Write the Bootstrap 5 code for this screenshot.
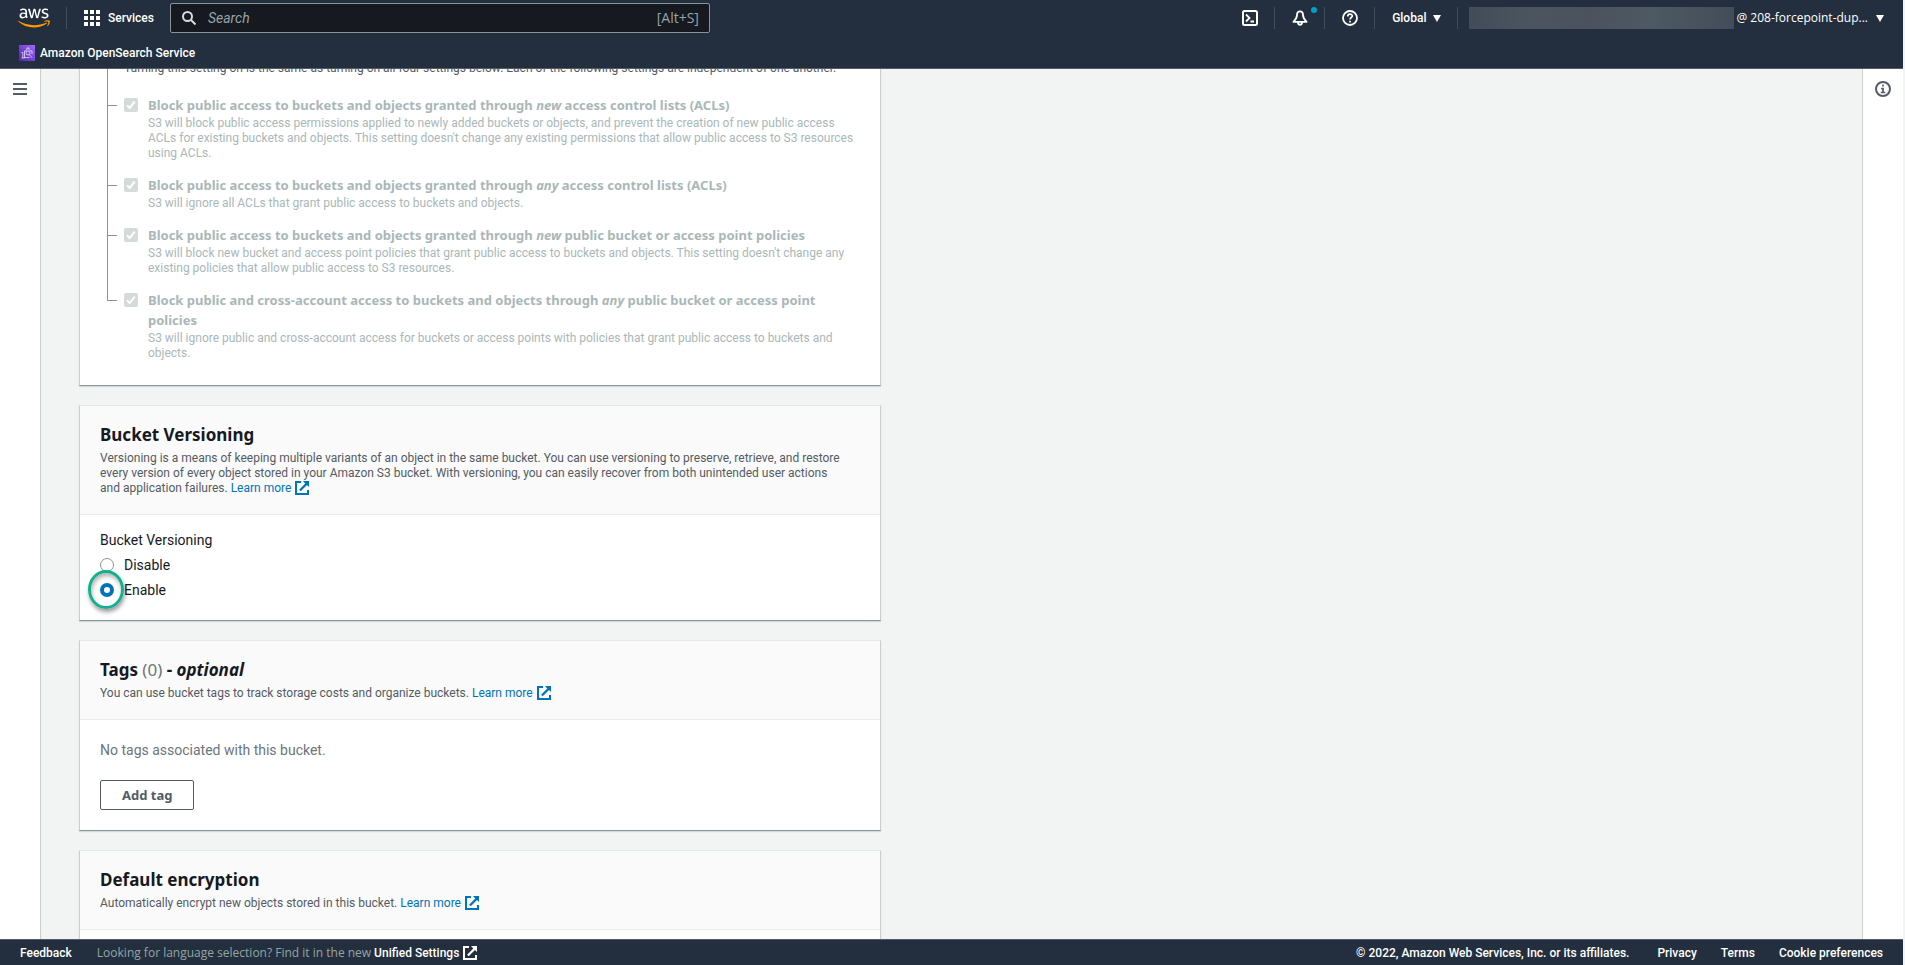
<!DOCTYPE html>
<html lang="en">
<head>
<meta charset="utf-8">
<meta name="viewport" content="width=device-width, initial-scale=1">
<title>Create bucket - Amazon S3</title>
<link href="https://cdn.jsdelivr.net/npm/bootstrap@5.3.0/dist/css/bootstrap.min.css" rel="stylesheet">
<style>
  :root { --navy: #232f3e; --ink: #16191f; --muted: #545b64; --disabled: #aab7b8; --blue: #0073bb; --line: #eaeded; }
  body { font-family: Roboto, "Open Sans", sans-serif; font-size: 14px; line-height: 20px; color: var(--ink); background: #f2f3f3; padding-right: 2px; }
  svg { display: block; flex: none; }
  a { text-decoration: none; }

  /* console header */
  .top-bar { background: var(--navy); border-bottom: 1px solid var(--muted); font-size: 12px; font-weight: 500; color: #fff; }
  .top-row { height: 36px; padding-left: 18px; padding-right: 19px; }
  .fav-row { height: 32px; padding: 2px 19px 0; }
  .top-bar a, .top-bar button, .foot-bar a, .foot-bar button { color: #fff; font-weight: 500; }
  .bare { background: none; border: 0; padding: 0; }
  .rule { width: 1px; height: 22px; background: #414d5c; flex: none; margin: 0 17px 0 16px; }
  .gap-tight { gap: 5px; }
  .search-box { width: 540px; height: 30px; margin-left: 16px; background: var(--ink); border: 1px solid #879596; border-radius: 2px; padding: 0 10px 0 11px; color: #95a5a6; font-size: 14px; }
  .search-box input { background: transparent; border: 0; outline: 0; color: #fff; font-size: 14px; font-weight: 400; padding: 0; min-width: 0; }
  .search-box input::placeholder { color: #95a5a6; font-style: italic; opacity: 1; }
  .search-box .hotkey { font-family: "Open Sans", sans-serif; font-weight: 400; }
  .dot { width: 6px; height: 6px; background: #00a1c9; top: -3px; right: -9px; }
  .redacted { width: 265px; height: 22px; background: linear-gradient(90deg, #414c59, #4a545f 20%, #4b525d 45%, #4d5963 68%, #434d59); margin-right: 2px; }
  .region { gap: 7px; }
  .account { font-family: "Open Sans", sans-serif; margin-left: -6px; }

  /* page frame */
  .side-strip { width: 41px; background: #fff; flex: none; }
  .side-left { border-right: 1px solid #c9cfcf; }
  .side-right { border-left: 1px solid #c9cfcf; }
  .work { padding-left: 38px; background: #f2f3f3; }
  .column { width: 802px; gap: 19px; }
  .column-scrolled { margin-top: -9px; }

  .panel { background: #fff; border: 1px solid #c9cfcf; border-top-color: #e4e8e8; border-bottom-color: #879596; box-shadow: 0 1px 1px #d5dbdb; }
  .panel-top { background: #fafafa; border-bottom: 1px solid var(--line); padding: 18px 20px; }
  .panel-main { padding: 15px 20px 20px; }
  .panel h2 { font-family: "Noto Sans", sans-serif; font-size: 17px; line-height: 22px; font-weight: 700; margin: 0 0 5px; }
  .note { font-size: 12px; line-height: 15px; color: var(--muted); margin: 0; }
  .note a { color: var(--blue); }
  .note svg { display: inline-block; vertical-align: -1px; margin: -4px 0 -2px 1px; }

  /* settings tree */
  .tree-panel { padding: 0 20px 24px; }
  .tree { padding-left: 7px; }
  .tree-intro { border-left: 1px solid #879596; padding: 1px 0 19px 16px; }
  .tree-row { position: relative; padding: 0 0 14px 17px; gap: 10px; }
  .tree-row::before { content: ""; position: absolute; left: 0; top: 0; width: 10px; height: 11px; border-left: 1px solid #879596; border-bottom: 1px solid #879596; }
  .tree-row:not(:last-child)::after { content: ""; position: absolute; left: 0; top: 11px; bottom: 0; border-left: 1px solid #879596; }
  .tree-row:last-child { padding-bottom: 0; }
  .tree-row label { display: block; font-family: "Noto Sans", sans-serif; font-size: 13px; line-height: 20px; font-weight: 700; color: var(--disabled); margin-bottom: 1px; }
  .tree-row .note { color: var(--disabled); }
  .tree-row input { appearance: none; flex: none; width: 14px; height: 14px; margin: 3px 0 0; border-radius: 2px; background: #d5dbdb url("data:image/svg+xml,%3Csvg xmlns='http://www.w3.org/2000/svg' viewBox='0 0 14 14'%3E%3Cpath d='M3 7.4 5.7 10 10.7 3.6' fill='none' stroke='%23fff' stroke-width='2'/%3E%3C/svg%3E"); }

  .panel legend { float: none; font-size: 14px; line-height: 20px; margin: 0; }
  .choice { gap: 10px; margin-top: 5px; }
  .choice input { appearance: none; width: 14px; height: 14px; margin: 0; border: 1px solid #879596; border-radius: 50%; background: #fff; }
  .choice input:checked { border: 4px solid var(--blue); }
  .ring { position: absolute; left: -12px; top: -10px; width: 36px; height: 39px; border: 3px solid #10b090; border-radius: 50%; box-shadow: 1px 3px 4px rgba(0,0,0,.4), inset 1px 3px 4px rgba(0,0,0,.3); pointer-events: none; }
  .add-btn { font-family: "Noto Sans", sans-serif; font-size: 13px; line-height: 20px; font-weight: 700; color: var(--muted); background: #fff; border: 1px solid var(--muted); border-radius: 2px; padding: 4px 21px; margin-top: 20px; }

  .foot-bar { background: var(--navy); border-top: 1px solid var(--muted); height: 27px; font-size: 12px; font-weight: 500; color: #fff; padding: 1px 20px 0; }
  .foot-bar .hint { font-family: "Open Sans", sans-serif; font-weight: 400; color: #95a5a6; margin-left: 25px; }
</style>
</head>
<body class="d-flex flex-column vh-100 overflow-hidden">

<svg width="0" height="0" class="position-absolute" aria-hidden="true">
  <symbol id="ext" viewBox="0 0 14 14"><path d="M6 1H1v12h12V9" fill="none" stroke="currentColor" stroke-width="2"/><path d="M8 0h6v6l-2-2-6.300 6.300-1.600-1.600L10.300 2.400z" fill="currentColor"/></symbol>
</svg>

<header class="top-bar">
  <div class="top-row d-flex align-items-center">
    <a href="#" aria-label="AWS home">
      <svg width="32" height="22" viewBox="0 0 304 182" aria-hidden="true">
        <path fill="#fff" d="M86.400 66.400c0 3.700.4 6.700 1.100 8.900.8 2.200 1.800 4.600 3.200 7.200.5.800.7 1.600.7 2.300 0 1-.6 2-1.900 3l-6.300 4.200c-.9.600-1.800.9-2.600.9-1 0-2-.5-3-1.400-1.400-1.500-2.600-3.100-3.600-4.700-1-1.700-2-3.600-3.100-5.900-7.800 9.200-17.600 13.800-29.400 13.800-8.400 0-15.100-2.400-20-7.200-4.900-4.800-7.400-11.200-7.400-19.200 0-8.500 3-15.400 9.100-20.600 6.100-5.200 14.200-7.800 24.500-7.800 3.400 0 6.900.3 10.600.8 3.700.5 7.500 1.300 11.500 2.200v-7.300c0-7.600-1.600-12.900-4.700-16-3.200-3.100-8.600-4.600-16.300-4.600-3.500 0-7.100.4-10.800 1.300-3.700.9-7.300 2-10.800 3.400-1.600.7-2.800 1.100-3.500 1.300-.7.200-1.200.3-1.600.3-1.400 0-2.100-1-2.100-3.100v-4.900c0-1.600.2-2.800.7-3.500.5-.7 1.400-1.400 2.800-2.100 3.500-1.800 7.700-3.300 12.600-4.500 4.900-1.300 10.100-1.900 15.600-1.900 11.900 0 20.600 2.700 26.200 8.100 5.500 5.400 8.300 13.600 8.300 24.600v32.400zM45.800 81.600c3.300 0 6.700-.6 10.300-1.800 3.600-1.200 6.800-3.400 9.500-6.400 1.600-1.900 2.800-4 3.400-6.400.6-2.400 1-5.300 1-8.700v-4.200c-2.900-.7-6-1.300-9.200-1.700-3.200-.4-6.300-.6-9.400-.6-6.700 0-11.600 1.300-14.900 4-3.300 2.700-4.900 6.500-4.900 11.500 0 4.700 1.200 8.200 3.700 10.600 2.400 2.500 5.900 3.700 10.500 3.700zm80.300 10.800c-1.800 0-3-.3-3.800-1-.8-.6-1.500-2-2.100-3.900L96.700 10.200c-.6-2-.9-3.300-.9-4 0-1.600.8-2.500 2.400-2.500h9.800c1.900 0 3.200.3 3.900 1 .8.600 1.400 2 2 3.900l16.800 66.200 15.600-66.200c.5-2 1.100-3.300 1.900-3.900.8-.6 2.200-1 4-1h8c1.900 0 3.200.3 4 1 .8.600 1.500 2 1.900 3.900l15.800 67 17.300-67c.6-2 1.300-3.300 2-3.900.8-.6 2.100-1 3.900-1h9.300c1.600 0 2.500.8 2.500 2.500 0 .5-.1 1-.2 1.600-.1.600-.3 1.400-.7 2.500l-24.100 77.300c-.6 2-1.300 3.300-2.100 3.900-.8.600-2.100 1-3.800 1h-8.600c-1.900 0-3.200-.3-4-1-.8-.7-1.500-2-1.900-4L156 23l-15.400 64.400c-.5 2-1.100 3.300-1.900 4-.8.700-2.200 1-4 1zm128.500 2.700c-5.200 0-10.400-.6-15.400-1.800-5-1.200-8.900-2.500-11.500-4-1.600-.9-2.700-1.900-3.100-2.800-.4-.9-.6-1.900-.6-2.800v-5.100c0-2.100.8-3.100 2.300-3.100.6 0 1.200.1 1.800.3.6.2 1.500.6 2.500 1 3.400 1.500 7.100 2.700 11 3.500 4 .8 7.900 1.200 11.900 1.200 6.300 0 11.200-1.100 14.600-3.300 3.400-2.200 5.200-5.400 5.200-9.500 0-2.800-.9-5.100-2.700-7-1.800-1.900-5.200-3.600-10.100-5.200L246 52c-7.300-2.300-12.700-5.700-16-10.200-3.300-4.400-5-9.300-5-14.500 0-4.200.9-7.900 2.700-11.100 1.800-3.200 4.200-6 7.200-8.200 3-2.300 6.400-4 10.400-5.200 4-1.200 8.200-1.700 12.600-1.700 2.200 0 4.500.1 6.700.4 2.300.3 4.400.7 6.500 1.100 2 .5 3.900 1 5.700 1.600 1.800.6 3.200 1.200 4.200 1.800 1.400.8 2.400 1.600 3 2.500.6.800.9 1.900.9 3.300v4.700c0 2.100-.8 3.200-2.300 3.200-.8 0-2.100-.4-3.800-1.200-5.700-2.600-12.100-3.900-19.200-3.900-5.700 0-10.200.9-13.300 2.800-3.100 1.900-4.700 4.800-4.700 8.900 0 2.800 1 5.200 3 7.100 2 1.900 5.700 3.800 11 5.500l14.200 4.500c7.200 2.300 12.400 5.500 15.500 9.600 3.100 4.100 4.600 8.800 4.600 14 0 4.300-.9 8.200-2.600 11.600-1.800 3.400-4.200 6.400-7.300 8.800-3.100 2.500-6.800 4.300-11.100 5.600-4.500 1.400-9.200 2.100-14.300 2.100z"/>
        <path fill="#f90" d="M273.500 143.700c-32.900 24.300-80.700 37.200-121.800 37.200-57.600 0-109.500-21.300-148.700-56.700-3.100-2.800-.3-6.600 3.400-4.400 42.400 24.600 94.700 39.500 148.800 39.500 36.500 0 76.600-7.600 113.500-23.200 5.500-2.500 10.200 3.600 4.800 7.600zm13.700-15.600c-4.200-5.400-27.800-2.600-38.500-1.300-3.200.4-3.700-2.400-.8-4.500 18.800-13.200 49.700-9.400 53.300-5 3.600 4.500-1 35.400-18.600 50.200-2.700 2.300-5.300 1.100-4.100-1.900 4-9.900 12.900-32.200 8.700-37.500z"/>
      </svg>
    </a>
    <span class="rule"></span>
    <button class="bare d-flex align-items-center gap-2">
      <svg width="16" height="16" viewBox="0 0 16 16" fill="#fff" aria-hidden="true"><path d="M0 0h4v4H0zM6 0h4v4H6zM12 0h4v4h-4zM0 6h4v4H0zM6 6h4v4H6zM12 6h4v4h-4zM0 12h4v4H0zM6 12h4v4H6zM12 12h4v4h-4z"/></svg>
      Services
    </button>
    <div class="search-box d-flex align-items-center">
      <svg width="14" height="14" viewBox="0 0 14 14" fill="none" stroke="#d5dbdb" stroke-width="2" aria-hidden="true"><circle cx="5.500" cy="5.500" r="4.500"/><path d="m9 9 4.500 4.500"/></svg>
      <input type="search" class="flex-grow-1 ms-2 ps-1" placeholder="Search" aria-label="Search">
      <span class="hotkey">[Alt+S]</span>
    </div>
    <div class="ms-auto d-flex align-items-center">
      <button class="bare" aria-label="CloudShell"><svg width="16" height="16" viewBox="0 0 16 16" fill="none" stroke="#fff" stroke-width="2"><rect x="1" y="1" width="14" height="14" rx="1.500"/><path d="m4 4.500 3.500 3.500L4 11.500M8.500 11.500H12" stroke-width="1.800"/></svg></button>
      <span class="rule"></span>
      <button class="bare position-relative" aria-label="Notifications"><svg width="16" height="16" viewBox="0 0 16 16" fill="none" stroke="#fff" stroke-width="1.800" stroke-linejoin="round"><path d="M8 1.300C5.800 1.300 5 3.200 5 5c0 3-1.200 4.500-3.600 6.800h13.200C12.200 9.500 11 8 11 5c0-1.800-.8-3.700-3-3.700zM6 12.500c0 3 4 3 4 0"/></svg><span class="dot position-absolute rounded-circle"></span></button>
      <span class="rule"></span>
      <button class="bare" aria-label="Help"><svg width="16" height="16" viewBox="0 0 16 16" fill="none" stroke="#fff" stroke-width="1.800"><circle cx="8" cy="8" r="7"/><path d="M5.800 6.400C5.800 3.400 10.300 3.600 10.300 6c0 1.500-2.300 1.600-2.300 3.600M8 10.700v1.700" stroke-width="1.700"/></svg></button>
      <span class="rule"></span>
      <button class="bare region d-flex align-items-center">Global <svg width="8" height="7" viewBox="0 0 8 7" fill="#fff" aria-hidden="true"><path d="M0 0h8L4 7z"/></svg></button>
      <span class="rule"></span>
      <button class="bare account d-flex align-items-center"><span class="redacted"></span>@ 208-forcepoint-dup...<svg class="ms-2" width="8" height="7" viewBox="0 0 8 7" fill="#fff" aria-hidden="true"><path d="M0 0h8L4 7z"/></svg></button>
    </div>
  </div>
  <nav class="fav-row d-flex align-items-center" aria-label="Favorites">
    <a href="#" class="d-flex align-items-center gap-tight">
      <svg width="16" height="16" viewBox="0 0 16 16" aria-hidden="true"><defs><linearGradient id="os" x1="0" y1="1" x2="1" y2="0"><stop stop-color="#4d27a8"/><stop offset="1" stop-color="#a166ff"/></linearGradient></defs><path fill="url(#os)" d="M0 0h16v16H0z"/><g fill="none" stroke="#fff" stroke-opacity=".85" stroke-width=".8"><circle cx="9" cy="8" r="2"/><path d="m10.400 9.500 2.600 3.300M2.500 7.500h1.300v5.500M2.500 13h3V6h1.300L8 4.300V3h2v1.300L11.500 6H13v3M5.500 12.600H10.500"/></g></svg>
      Amazon OpenSearch Service
    </a>
  </nav>
</header>

<div class="d-flex flex-grow-1 overflow-hidden">
  <aside class="side-strip side-left pt-2">
    <button class="bare mt-1 ms-2 ps-1" aria-label="Open navigation"><svg width="16" height="18" viewBox="0 0 16 18" stroke="#545b64" stroke-width="2" aria-hidden="true"><path d="M1 3h14M1 8h14M1 13h14"/></svg></button>
  </aside>

  <main class="work flex-grow-1 overflow-hidden">
    <div class="column column-scrolled d-flex flex-column">

      <section class="panel border-top-0">
        <div class="tree-panel">
          <div class="tree">
            <p class="note tree-intro">Turning this setting on is the same as turning on all four settings below. Each of the following settings are independent of one another.</p>
            <div class="tree-row d-flex">
              <input type="checkbox" id="b1" checked disabled>
              <div><label for="b1">Block public access to buckets and objects granted through <em>new</em> access control lists (ACLs)</label>
              <p class="note">S3 will block public access permissions applied to newly added buckets or objects, and prevent the creation of new public access<br>ACLs for existing buckets and objects. This setting doesn't change any existing permissions that allow public access to S3 resources<br>using ACLs.</p></div>
            </div>
            <div class="tree-row d-flex">
              <input type="checkbox" id="b2" checked disabled>
              <div><label for="b2">Block public access to buckets and objects granted through <em>any</em> access control lists (ACLs)</label>
              <p class="note">S3 will ignore all ACLs that grant public access to buckets and objects.</p></div>
            </div>
            <div class="tree-row d-flex">
              <input type="checkbox" id="b3" checked disabled>
              <div><label for="b3">Block public access to buckets and objects granted through <em>new</em> public bucket or access point policies</label>
              <p class="note">S3 will block new bucket and access point policies that grant public access to buckets and objects. This setting doesn't change any<br>existing policies that allow public access to S3 resources.</p></div>
            </div>
            <div class="tree-row d-flex">
              <input type="checkbox" id="b4" checked disabled>
              <div><label for="b4">Block public and cross-account access to buckets and objects through <em>any</em> public bucket or access point<br>policies</label>
              <p class="note">S3 will ignore public and cross-account access for buckets or access points with policies that grant public access to buckets and<br>objects.</p></div>
            </div>
          </div>
        </div>
      </section>

      <section class="panel">
        <div class="panel-top">
          <h2>Bucket Versioning</h2>
          <p class="note">Versioning is a means of keeping multiple variants of an object in the same bucket. You can use versioning to preserve, retrieve, and restore<br>every version of every object stored in your Amazon S3 bucket. With versioning, you can easily recover from both unintended user actions<br>and application failures. <a href="#">Learn more <svg width="14" height="14"><use href="#ext"/></svg></a></p>
        </div>
        <div class="panel-main">
          <fieldset>
            <legend>Bucket Versioning</legend>
            <div class="choice d-flex align-items-center"><input type="radio" name="versioning" id="v0"><label for="v0">Disable</label></div>
            <div class="choice d-flex align-items-center position-relative"><input type="radio" name="versioning" id="v1" checked><label for="v1">Enable</label><span class="ring"></span></div>
          </fieldset>
        </div>
      </section>

      <section class="panel">
        <div class="panel-top">
          <h2>Tags <span class="fw-normal text-secondary">(0)</span> - <em>optional</em></h2>
          <p class="note">You can use bucket tags to track storage costs and organize buckets. <a href="#">Learn more <svg width="14" height="14"><use href="#ext"/></svg></a></p>
        </div>
        <div class="panel-main pt-3 mt-1">
          <div class="text-secondary">No tags associated with this bucket.</div>
          <button class="add-btn">Add tag</button>
        </div>
      </section>

      <section class="panel">
        <div class="panel-top">
          <h2>Default encryption</h2>
          <p class="note">Automatically encrypt new objects stored in this bucket. <a href="#">Learn more <svg width="14" height="14"><use href="#ext"/></svg></a></p>
        </div>
        <div class="panel-main"></div>
      </section>
    </div>
  </main>

  <aside class="side-strip side-right pt-2">
    <button class="bare mt-1 ms-2 ps-1" aria-label="Info"><svg width="16" height="16" viewBox="0 0 16 16" fill="none" stroke="#545b64" stroke-width="2" aria-hidden="true"><circle cx="8" cy="8" r="7"/><path d="M8 3.500v2M6 7.500h2v4M5.800 11.500h4.500" stroke-width="1.700"/></svg></button>
  </aside>
</div>

<footer class="foot-bar d-flex align-items-center">
  <button class="bare">Feedback</button>
  <span class="hint">Looking for language selection? Find it in the new</span>
  <a href="#" class="d-flex align-items-center gap-1">&nbsp;Unified Settings <svg width="14" height="14"><use href="#ext"/></svg></a>
  <span class="ms-auto">© 2022, Amazon Web Services, Inc. or its affiliates.</span>
  <a href="#" class="ms-4 ps-1">Privacy</a>
  <a href="#" class="ms-4">Terms</a>
  <a href="#" class="ms-4">Cookie preferences</a>
</footer>

<script src="https://cdn.jsdelivr.net/npm/bootstrap@5.3.0/dist/js/bootstrap.bundle.min.js"></script>
</body>
</html>
